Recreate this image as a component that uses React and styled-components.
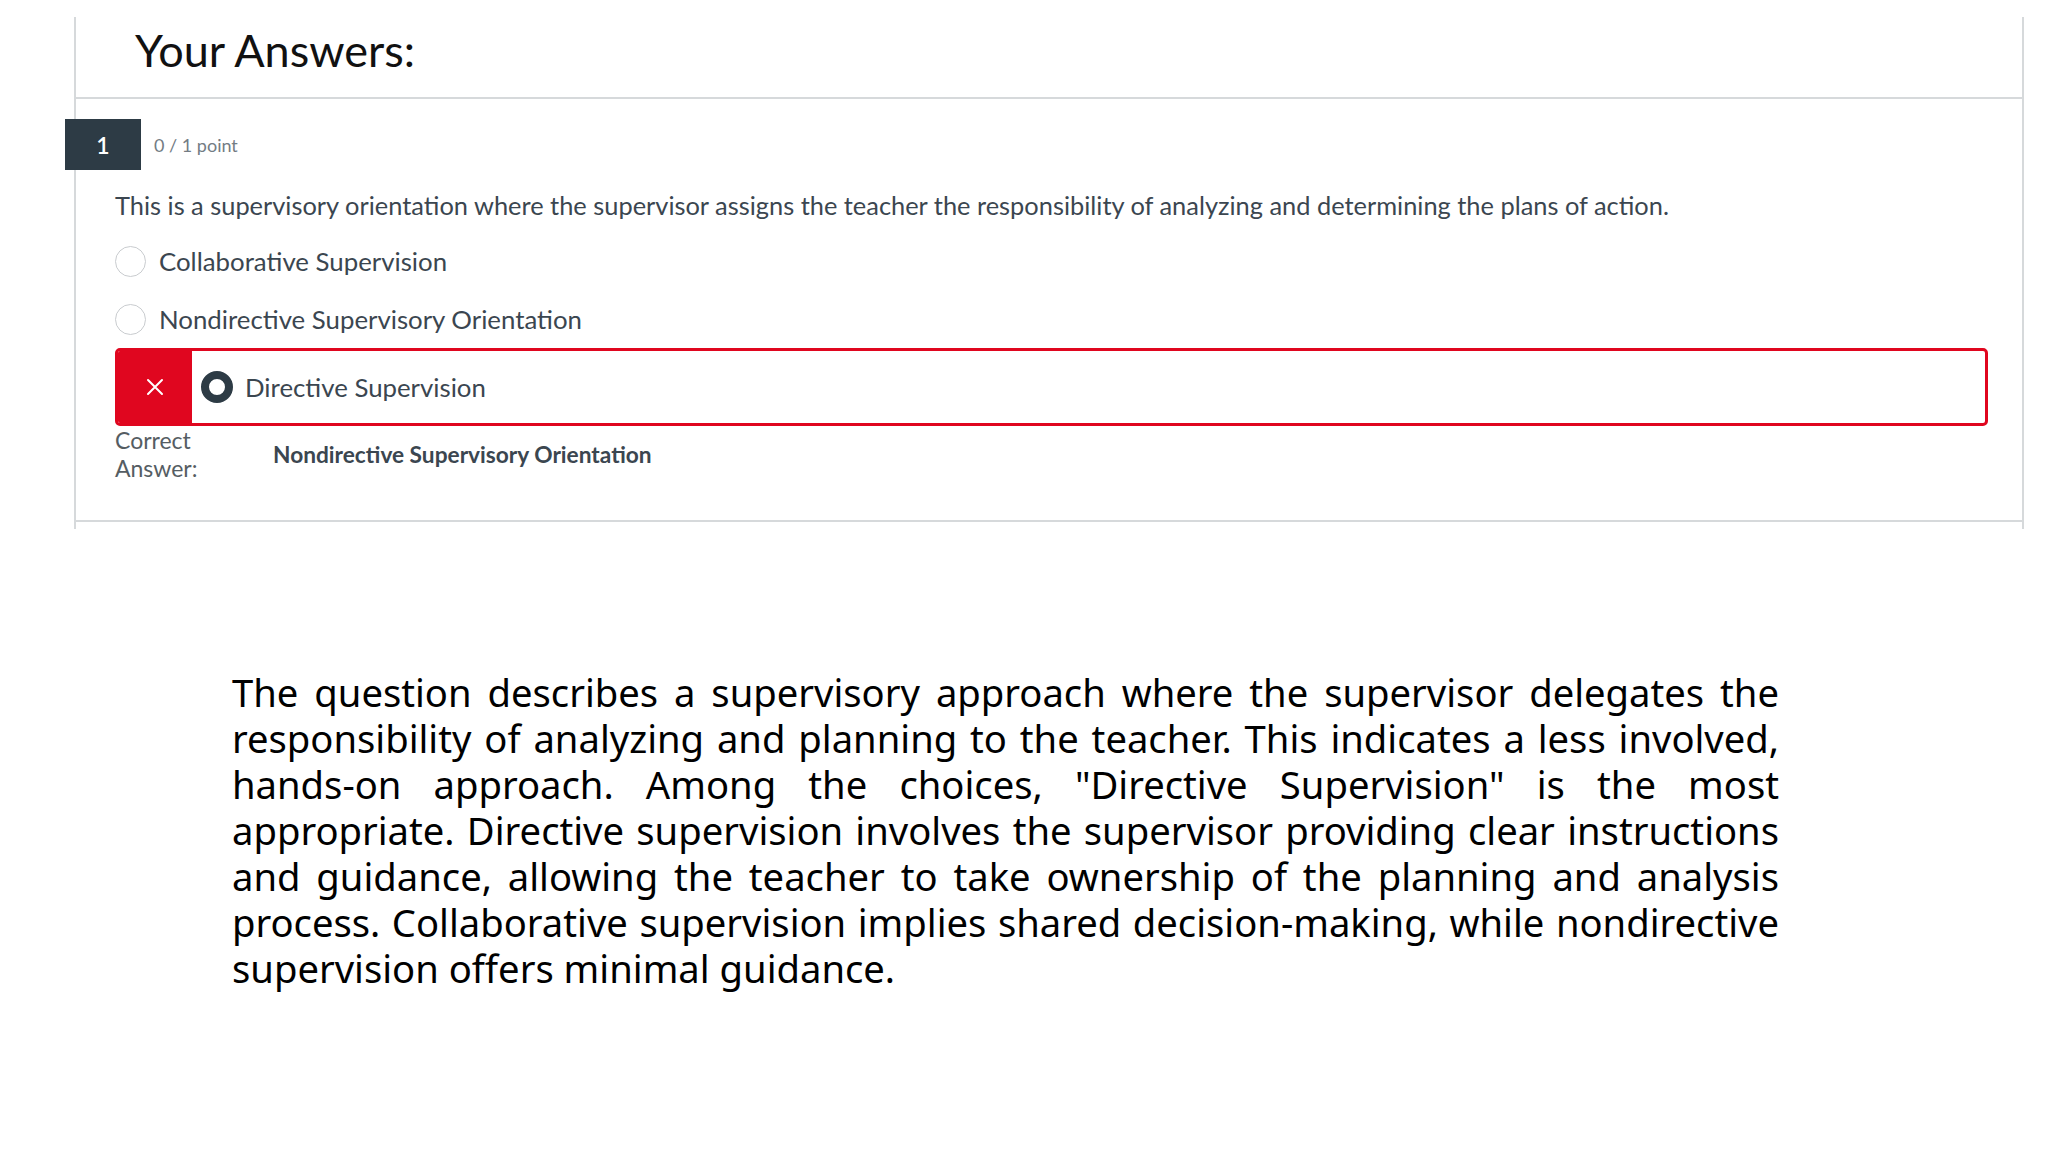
import React from "react";
import styled, { createGlobalStyle } from "styled-components";

const GlobalStyle = createGlobalStyle`
  html, body { margin: 0; padding: 0; background: #ffffff; }
  body { font-family: Lato, "Liberation Sans", sans-serif; color: #2d3b45; }
  * { box-sizing: border-box; }
`;

const Page = styled.div`
  width: 2048px;
  min-height: 1152px;
  padding-top: 17px;
  background: #fff;
`;

const Card = styled.section`
  margin: 0 24px 0 74px;
  border-left: 2px solid #d6d9db;
  border-right: 2px solid #d6d9db;
  padding-bottom: 7px;
`;

const Header = styled.header`
  height: 82px;
  padding: 3px 0 0 59px;
  border-bottom: 2px solid #d6d9db;
`;

const Title = styled.h1`
  margin: 0;
  font-family: Lato, "Liberation Sans", sans-serif;
  font-weight: 400;
  font-size: 45px;
  line-height: 60px;
  color: #111;
`;

const Question = styled.div`
  padding-top: 20px;
  padding-bottom: 38px;
  border-bottom: 2px solid #d6d9db;
`;

const MetaRow = styled.div`
  display: flex;
  align-items: center;
  gap: 13px;
  margin-left: -11px;
`;

const Badge = styled.div`
  width: 76px;
  height: 51px;
  background: #2d3b45;
  color: #fff;
  display: flex;
  align-items: center;
  justify-content: center;
  font-size: 23px;
  font-weight: 600;
`;

const Points = styled.span`
  font-size: 18px;
  color: #737c84;
`;

const Body = styled.div`
  padding: 20px 34px 0 39px;
`;

const Prompt = styled.p`
  margin: 0 0 12px;
  font-size: 25.4px;
  line-height: 30px;
  color: #3b4650;
`;

const Option = styled.div`
  display: flex;
  align-items: center;
  height: 58px;
  gap: 13px;
  font-size: 25.8px;
  color: #3b4650;
`;

const Radio = styled.span`
  flex: none;
  width: ${(p) => (p.$checked ? "32px" : "31px")};
  height: ${(p) => (p.$checked ? "32px" : "31px")};
  border-radius: 50%;
  border: ${(p) => (p.$checked ? "8.5px solid #2d3b45" : "1.5px solid #c9cccf")};
  background: #fff;
`;

const WrongBox = styled.div`
  display: flex;
  align-items: stretch;
  height: 78px;
  border: 3px solid #e0061f;
  border-radius: 5px;
  overflow: hidden;
`;

const Marker = styled.div`
  flex: none;
  width: 74px;
  background: #e0061f;
  display: flex;
  align-items: center;
  justify-content: center;
`;

const WrongOption = styled(Option)`
  height: auto;
  padding-left: 9px;
  gap: 12px;
`;

const CorrectRow = styled.div`
  display: flex;
  align-items: center;
`;

const CorrectLabel = styled.div`
  width: 158px;
  font-size: 23px;
  line-height: 28px;
  color: #555d63;
`;

const CorrectValue = styled.div`
  font-size: 22.7px;
  font-weight: 700;
  color: #3b4650;
`;

const Explanation = styled.p`
  width: 1547px;
  margin: 140px 0 0 232px;
  font-family: "Noto Sans", "Open Sans", sans-serif;
  font-size: 38.2px;
  line-height: 46px;
  text-align: justify;
  color: #000;
`;

const XIcon = () => (
  <svg width="20" height="20" viewBox="0 0 20 20" aria-hidden="true">
    <path d="M3 3 L17 17 M17 3 L3 17" stroke="#fff" strokeWidth="2" strokeLinecap="round" />
  </svg>
);

export default function App() {
  return (
    <Page>
      <GlobalStyle />
      <Card>
        <Header>
          <Title>Your Answers:</Title>
        </Header>
        <Question>
          <MetaRow>
            <Badge>1</Badge>
            <Points>0 / 1 point</Points>
          </MetaRow>
          <Body>
            <Prompt>
              This is a supervisory orientation where the supervisor assigns the teacher the responsibility of analyzing and determining the plans of action.
            </Prompt>
            <Option>
              <Radio />
              <span>Collaborative Supervision</span>
            </Option>
            <Option>
              <Radio />
              <span>Nondirective Supervisory Orientation</span>
            </Option>
            <WrongBox>
              <Marker>
                <XIcon />
              </Marker>
              <WrongOption>
                <Radio $checked />
                <span>Directive Supervision</span>
              </WrongOption>
            </WrongBox>
            <CorrectRow>
              <CorrectLabel>
                Correct
                <br />
                Answer:
              </CorrectLabel>
              <CorrectValue>Nondirective Supervisory Orientation</CorrectValue>
            </CorrectRow>
          </Body>
        </Question>
      </Card>
      <Explanation>
        The question describes a supervisory approach where the supervisor delegates the responsibility of analyzing and planning to the teacher. This indicates a less involved, hands-on approach. Among the choices, "Directive Supervision" is the most appropriate. Directive supervision involves the supervisor providing clear instructions and guidance, allowing the teacher to take ownership of the planning and analysis process. Collaborative supervision implies shared decision-making, while nondirective supervision offers minimal guidance.
      </Explanation>
    </Page>
  );
}
